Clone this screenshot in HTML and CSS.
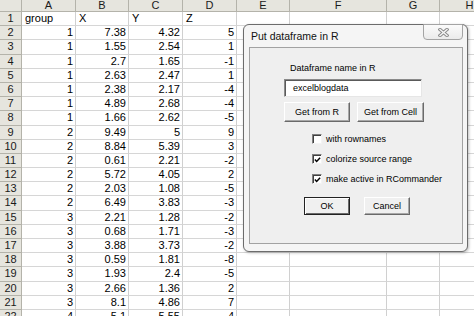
FILE: index.html
```html
<!DOCTYPE html>
<html>
<head>
<meta charset="utf-8">
<link rel="stylesheet" href="styles.css">
</head>
<body>
<div class="app">
  <div class="sheet">
    <div class="h corner"></div><div class="h col">A</div><div class="h col">B</div><div class="h col">C</div><div class="h col">D</div><div class="h col">E</div><div class="h col">F</div><div class="h col">G</div><div class="h col">H</div>
    <div class="h row">1</div><div class="c">group</div><div class="c">X</div><div class="c">Y</div><div class="c">Z</div><div class="c"></div><div class="c"></div><div class="c"></div><div class="c"></div>
    <div class="h row">2</div><div class="c n">1</div><div class="c n">7.38</div><div class="c n">4.32</div><div class="c n">5</div><div class="c"></div><div class="c"></div><div class="c"></div><div class="c"></div>
    <div class="h row">3</div><div class="c n">1</div><div class="c n">1.55</div><div class="c n">2.54</div><div class="c n">1</div><div class="c"></div><div class="c"></div><div class="c"></div><div class="c"></div>
    <div class="h row">4</div><div class="c n">1</div><div class="c n">2.7</div><div class="c n">1.65</div><div class="c n">-1</div><div class="c"></div><div class="c"></div><div class="c"></div><div class="c"></div>
    <div class="h row">5</div><div class="c n">1</div><div class="c n">2.63</div><div class="c n">2.47</div><div class="c n">1</div><div class="c"></div><div class="c"></div><div class="c"></div><div class="c"></div>
    <div class="h row">6</div><div class="c n">1</div><div class="c n">2.38</div><div class="c n">2.17</div><div class="c n">-4</div><div class="c"></div><div class="c"></div><div class="c"></div><div class="c"></div>
    <div class="h row">7</div><div class="c n">1</div><div class="c n">4.89</div><div class="c n">2.68</div><div class="c n">-4</div><div class="c"></div><div class="c"></div><div class="c"></div><div class="c"></div>
    <div class="h row">8</div><div class="c n">1</div><div class="c n">1.66</div><div class="c n">2.62</div><div class="c n">-5</div><div class="c"></div><div class="c"></div><div class="c"></div><div class="c"></div>
    <div class="h row">9</div><div class="c n">2</div><div class="c n">9.49</div><div class="c n">5</div><div class="c n">9</div><div class="c"></div><div class="c"></div><div class="c"></div><div class="c"></div>
    <div class="h row">10</div><div class="c n">2</div><div class="c n">8.84</div><div class="c n">5.39</div><div class="c n">3</div><div class="c"></div><div class="c"></div><div class="c"></div><div class="c"></div>
    <div class="h row">11</div><div class="c n">2</div><div class="c n">0.61</div><div class="c n">2.21</div><div class="c n">-2</div><div class="c"></div><div class="c"></div><div class="c"></div><div class="c"></div>
    <div class="h row">12</div><div class="c n">2</div><div class="c n">5.72</div><div class="c n">4.05</div><div class="c n">2</div><div class="c"></div><div class="c"></div><div class="c"></div><div class="c"></div>
    <div class="h row">13</div><div class="c n">2</div><div class="c n">2.03</div><div class="c n">1.08</div><div class="c n">-5</div><div class="c"></div><div class="c"></div><div class="c"></div><div class="c"></div>
    <div class="h row">14</div><div class="c n">2</div><div class="c n">6.49</div><div class="c n">3.83</div><div class="c n">-3</div><div class="c"></div><div class="c"></div><div class="c"></div><div class="c"></div>
    <div class="h row">15</div><div class="c n">3</div><div class="c n">2.21</div><div class="c n">1.28</div><div class="c n">-2</div><div class="c"></div><div class="c"></div><div class="c"></div><div class="c"></div>
    <div class="h row">16</div><div class="c n">3</div><div class="c n">0.68</div><div class="c n">1.71</div><div class="c n">-3</div><div class="c"></div><div class="c"></div><div class="c"></div><div class="c"></div>
    <div class="h row">17</div><div class="c n">3</div><div class="c n">3.88</div><div class="c n">3.73</div><div class="c n">-2</div><div class="c"></div><div class="c"></div><div class="c"></div><div class="c"></div>
    <div class="h row">18</div><div class="c n">3</div><div class="c n">0.59</div><div class="c n">1.81</div><div class="c n">-8</div><div class="c"></div><div class="c"></div><div class="c"></div><div class="c"></div>
    <div class="h row">19</div><div class="c n">3</div><div class="c n">1.93</div><div class="c n">2.4</div><div class="c n">-5</div><div class="c"></div><div class="c"></div><div class="c"></div><div class="c"></div>
    <div class="h row">20</div><div class="c n">3</div><div class="c n">2.66</div><div class="c n">1.36</div><div class="c n">2</div><div class="c"></div><div class="c"></div><div class="c"></div><div class="c"></div>
    <div class="h row">21</div><div class="c n">3</div><div class="c n">8.1</div><div class="c n">4.86</div><div class="c n">7</div><div class="c"></div><div class="c"></div><div class="c"></div><div class="c"></div>
    <div class="h row">22</div><div class="c n">4</div><div class="c n">5.1</div><div class="c n">5.55</div><div class="c n">4</div><div class="c"></div><div class="c"></div><div class="c"></div><div class="c"></div>
  </div>

  <div class="dlg">
    <div class="titlebar">
      <span class="title">Put dataframe in R</span>
      <div class="close">
        <svg width="11" height="9" viewBox="0 0 11 9">
          <path d="M2 1.5 L9 7.5 M9 1.5 L2 7.5" stroke="#8c8c8c" stroke-width="3.4" stroke-linecap="square"/>
          <path d="M2 1.5 L9 7.5 M9 1.5 L2 7.5" stroke="#f6f6f6" stroke-width="1.4" stroke-linecap="square"/>
        </svg>
      </div>
    </div>
    <div class="client">
      <div class="form">
        <div class="lbl">Dataframe name in R</div>
        <div class="tb">excelblogdata</div>
        <div class="btnrow">
          <div class="btn get1">Get from R</div>
          <div class="btn get2">Get from Cell</div>
        </div>
        <div class="checks">
          <div class="chk"><span class="box"></span><span>with rownames</span></div>
          <div class="chk"><span class="box"><svg width="8" height="8" viewBox="0 0 8 8"><path d="M1 3.5 L3 5.6 L7 1.3" fill="none" stroke="#000" stroke-width="1.7"/></svg></span><span>colorize source range</span></div>
          <div class="chk"><span class="box"><svg width="8" height="8" viewBox="0 0 8 8"><path d="M1 3.5 L3 5.6 L7 1.3" fill="none" stroke="#000" stroke-width="1.7"/></svg></span><span>make active in RCommander</span></div>
        </div>
        <div class="okrow">
          <div class="btn ok">OK</div>
          <div class="btn cancel">Cancel</div>
        </div>
      </div>
    </div>
  </div>
</div>
</body>
</html>
```

FILE: styles.css
```css
html, body {
  margin: 0;
  padding: 0;
  background: #ffffff;
}

.app {
  position: relative;
  width: 474px;
  height: 316px;
  overflow: hidden;
}

.sheet {
  display: grid;
  grid-template-columns: 22px 54px 53px 54px 54px 53px 97px 53px 60px;
  grid-template-rows: 12px;
  grid-auto-rows: 14.2px;
  font-family: "Liberation Sans", Arial, sans-serif;
  font-size: 11px;
  color: #000;
}

.c {
  box-sizing: border-box;
  border-right: 1px solid #d0d0d0;
  border-bottom: 1px solid #d6d6d6;
  padding: 0 2px 0 3px;
  line-height: 13px;
  white-space: nowrap;
  overflow: hidden;
}

.n {
  text-align: right;
}

.h {
  box-sizing: border-box;
  background: #e6e5de;
  border-right: 1px solid #b4b3aa;
  border-bottom: 1px solid #b4b3aa;
  text-align: center;
  white-space: nowrap;
  overflow: hidden;
  color: #1a1a1a;
}

.col {
  font-size: 11px;
  line-height: 11px;
}

.row {
  font-size: 11px;
  line-height: 13px;
}

/* dialog window */
.dlg {
  position: absolute;
  left: 243px;
  top: 24px;
  width: 225px;
  height: 228px;
  box-sizing: border-box;
  border: 1px solid #6c6c6c;
  border-radius: 6px;
  background: #f5f5f5;
  padding: 0 4px 7px 5px;
  display: flex;
  flex-direction: column;
  box-shadow: 1px 1px 3px rgba(0, 0, 0, 0.25);
  font-family: "Liberation Sans", Arial, sans-serif;
  color: #000;
}

.titlebar {
  height: 22px;
  display: flex;
  align-items: flex-start;
}

.title {
  font-size: 10.5px;
  line-height: 12px;
  margin-top: 5px;
  margin-left: 2px;
  color: #111;
}

.close {
  margin-left: auto;
  margin-top: -1px;
  width: 40px;
  height: 16px;
  box-sizing: border-box;
  border: 1px solid #a4a4a4;
  border-radius: 0 0 4px 4px;
  background: linear-gradient(#fbfbfb, #ebebeb);
  display: flex;
  align-items: center;
  justify-content: center;
}

.client {
  flex: 1;
  border: 1px solid #a2a2a2;
  background: #efefef;
  font-size: 9px;
}

.form {
  margin-left: 34px;
  padding-top: 14px;
  width: 140px;
  display: flex;
  flex-direction: column;
  align-items: flex-start;
}

.lbl {
  line-height: 12px;
  margin-left: 6px;
}

.tb {
  margin-top: 5px;
  width: 138px;
  height: 18px;
  box-sizing: border-box;
  background: #fff;
  border: 1px solid;
  border-color: #8a8a8a #e6e6e6 #e6e6e6 #8a8a8a;
  box-shadow: inset 1px 1px 0 #5a5a5a;
  padding-left: 8px;
  line-height: 16px;
}

.btnrow {
  margin-top: 5px;
  display: flex;
  gap: 7px;
}

.btn {
  box-sizing: border-box;
  height: 20px;
  border: 1px solid;
  border-color: #ffffff #6a6a6a #6a6a6a #ffffff;
  box-shadow: inset -1px -1px 0 #a8a8a8;
  background: #f0f0f0;
  display: flex;
  align-items: center;
  justify-content: center;
  white-space: nowrap;
}

.get1 { width: 66px; }
.get2 { width: 67px; }

.checks {
  margin-top: 7px;
  margin-left: 28px;
  display: flex;
  flex-direction: column;
}

.chk {
  height: 20px;
  display: flex;
  align-items: center;
  gap: 4px;
  white-space: nowrap;
}

.box {
  width: 10px;
  height: 10px;
  box-sizing: border-box;
  background: #fff;
  border: 1px solid;
  border-color: #808080 #f4f4f4 #f4f4f4 #808080;
  box-shadow: inset 1px 1px 0 #404040;
  display: flex;
  align-items: center;
  justify-content: center;
}

.box svg {
  margin: 1px 0 0 1px;
}

.okrow {
  margin-top: 8px;
  margin-left: 20px;
  display: flex;
  gap: 14px;
}

.ok, .cancel {
  width: 46px;
  height: 18px;
}

.ok {
  border-color: #222;
  box-shadow: inset 1px 1px 0 #fff, inset -1px -1px 0 #6a6a6a;
}
```
